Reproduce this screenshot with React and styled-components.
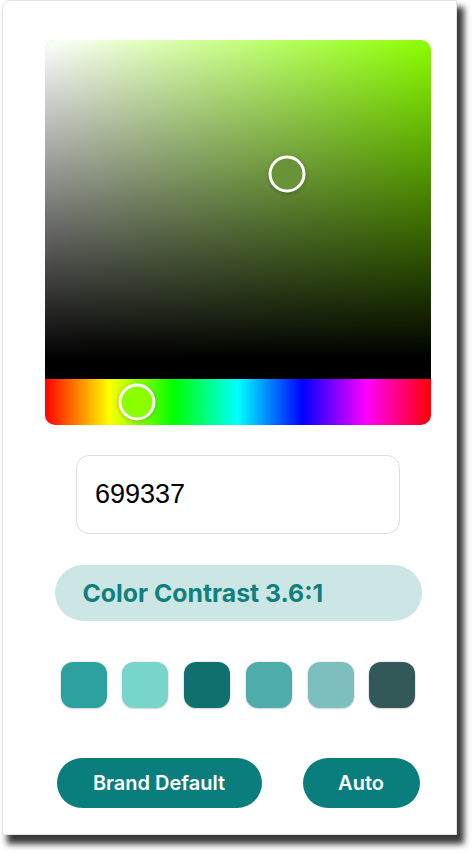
import React from "react";
import styled, { createGlobalStyle } from "styled-components";

const GlobalStyle = createGlobalStyle`
  html, body {
    margin: 0;
    padding: 0;
    background: #ffffff;
  }
  body {
    font-family: Inter, "Noto Sans", Arial, sans-serif;
  }
`;

const Page = styled.div`
  width: 474px;
  height: 853px;
  overflow: hidden;
  padding-left: 2px;
  box-sizing: border-box;
`;

const Panel = styled.div`
  width: 455px;
  height: 835px;
  box-sizing: border-box;
  background: #ffffff;
  border: 1px solid #e3e3e3;
  border-radius: 8px 0 0 0;
  box-shadow: 6px 8px 6px 1px rgba(0, 0, 0, 0.78);
  padding: 39px 25px 0 42px;
  display: flex;
  flex-direction: column;
  align-items: center;
`;

const Picker = styled.div`
  position: relative;
  width: 386px;
  border-radius: 10px;
  overflow: hidden;
  display: flex;
  flex-direction: column;
`;

const SatArea = styled.div`
  position: relative;
  height: 339px;
  background:
    linear-gradient(to top, #000 6%, rgba(0, 0, 0, 0) 100%),
    linear-gradient(to right, #fff 0%, rgba(255, 255, 255, 0) 100%),
    ${(p) => p.$hue};
`;

const HueBar = styled.div`
  position: relative;
  height: 46px;
  background: linear-gradient(
    to right,
    #ff0000 0%,
    #ffff00 16.67%,
    #00ff00 33.33%,
    #00ffff 50%,
    #0000ff 66.67%,
    #ff00ff 83.33%,
    #ff0000 100%
  );
`;

const Thumb = styled.div`
  position: absolute;
  width: 37px;
  height: 37px;
  box-sizing: border-box;
  border-radius: 50%;
  border: 3px solid #ffffff;
  transform: translate(-50%, -50%);
  box-shadow: 0 1px 4px rgba(0, 0, 0, 0.25);
`;

const HexField = styled.div`
  margin-top: 30px;
  width: 324px;
  height: 79px;
  box-sizing: border-box;
  border: 1px solid #dddddd;
  border-radius: 13px;
  display: flex;
  align-items: center;
  padding-left: 18px;
  font-family: "Liberation Sans", Arial, sans-serif;
  font-size: 27px;
  color: #000000;
`;

const ContrastPill = styled.div`
  margin-top: 31px;
  width: 367px;
  height: 56px;
  box-sizing: border-box;
  border-radius: 28px;
  background: #cce6e5;
  color: #127f7c;
  display: flex;
  align-items: center;
  padding-left: 28px;
  font-family: Inter, sans-serif;
  font-weight: 700;
  font-size: 24.8px;
`;

const SwatchRow = styled.div`
  margin-top: 41px;
  width: 355px;
  display: flex;
  justify-content: space-between;
`;

const Swatch = styled.div`
  width: 46px;
  height: 46px;
  box-sizing: border-box;
  border-radius: 12px;
  background: ${(p) => p.$color};
  box-shadow: 0 0 0 1px rgba(0, 0, 0, 0.06), 0 1px 2px rgba(0, 0, 0, 0.12);
`;

const ButtonRow = styled.div`
  margin-top: 50px;
  width: 363px;
  display: flex;
  justify-content: space-between;
`;

const PillButton = styled.button`
  width: ${(p) => p.$width}px;
  height: 50px;
  border: none;
  border-radius: 25px;
  background: #0a7e7c;
  color: #ffffff;
  font-family: Inter, sans-serif;
  font-weight: 600;
  font-size: 20px;
  padding: 0;
  cursor: pointer;
`;

function hexToHsv(hex) {
  const r = parseInt(hex.slice(0, 2), 16) / 255;
  const g = parseInt(hex.slice(2, 4), 16) / 255;
  const b = parseInt(hex.slice(4, 6), 16) / 255;
  const max = Math.max(r, g, b);
  const min = Math.min(r, g, b);
  const d = max - min;
  let h = 0;
  if (d !== 0) {
    if (max === r) h = ((g - b) / d) % 6;
    else if (max === g) h = (b - r) / d + 2;
    else h = (r - g) / d + 4;
    h *= 60;
    if (h < 0) h += 360;
  }
  return { h, s: max === 0 ? 0 : d / max, l: (max + min) / 2 };
}

const swatches = ["#2ca19f", "#78d5cb", "#0f706e", "#4eacaa", "#7dbebe", "#335858"];

export default function App() {
  const hex = "699337";
  const { h, s, l } = hexToHsv(hex);
  const hueColor = `hsl(${h}, 100%, 50%)`;

  return (
    <>
      <GlobalStyle />
      <Page>
        <Panel>
          <Picker>
            <SatArea $hue={hueColor}>
              <Thumb
                style={{
                  left: `${s * 100}%`,
                  top: `${l * 100}%`,
                  background: `#${hex}`,
                }}
              />
            </SatArea>
            <HueBar>
              <Thumb
                style={{
                  left: `${(h / 360) * 100 - 0.5}%`,
                  top: "50%",
                  background: hueColor,
                }}
              />
            </HueBar>
          </Picker>
          <HexField>{hex}</HexField>
          <ContrastPill>Color Contrast 3.6:1</ContrastPill>
          <SwatchRow>
            {swatches.map((c) => (
              <Swatch key={c} $color={c} />
            ))}
          </SwatchRow>
          <ButtonRow>
            <PillButton $width={205}>Brand Default</PillButton>
            <PillButton $width={117}>Auto</PillButton>
          </ButtonRow>
        </Panel>
      </Page>
    </>
  );
}
